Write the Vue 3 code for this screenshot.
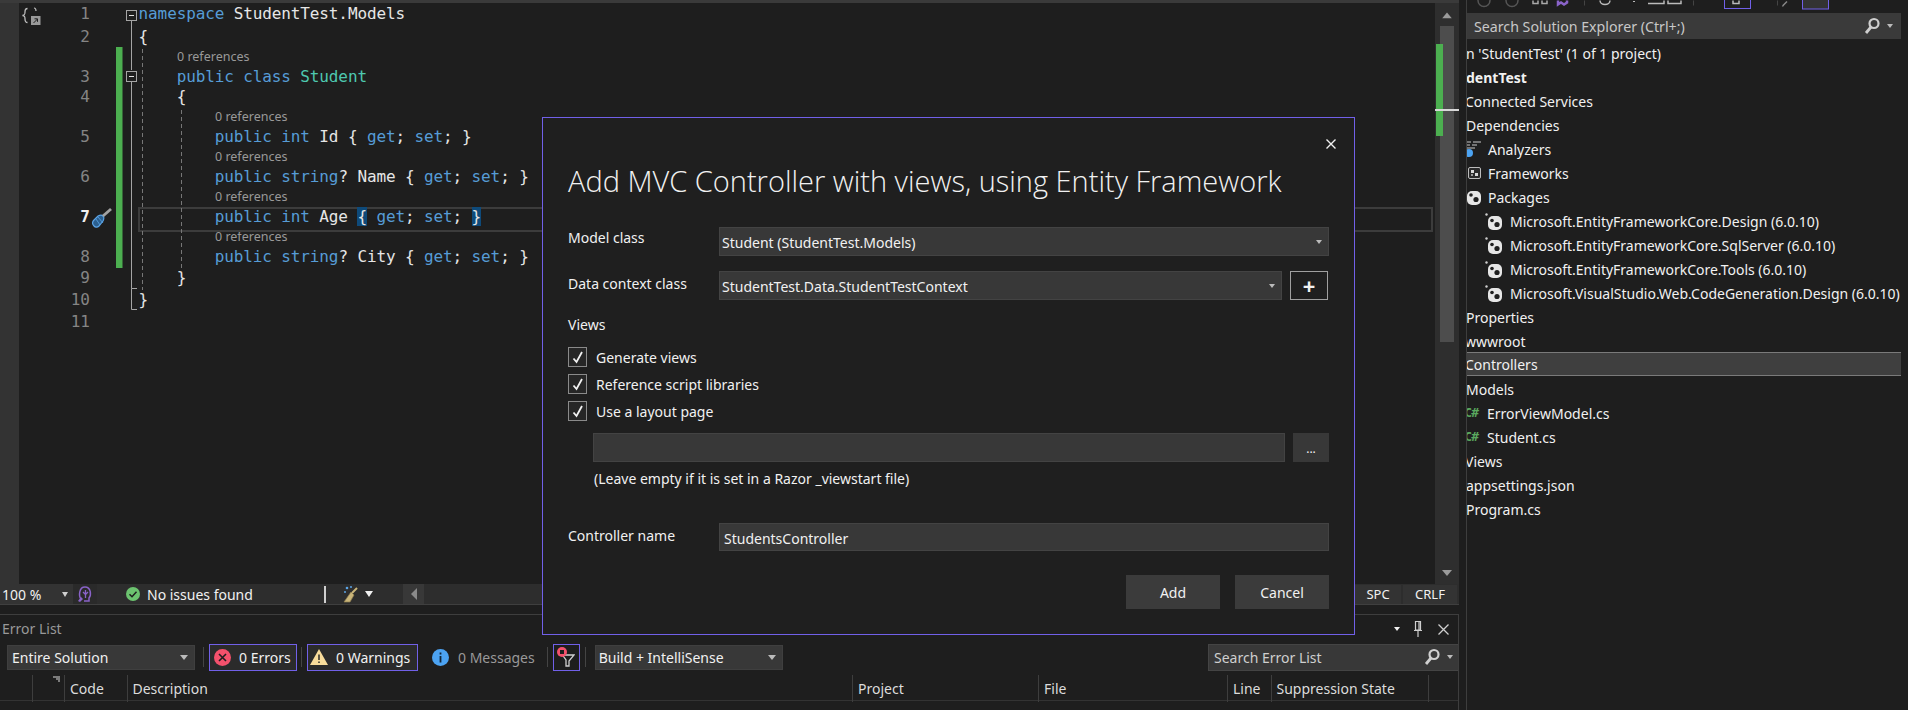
<script setup>
const k = (t) => ({ t, c: 'kw' })
const p = (t) => ({ t, c: 'pl' })
const y = (t) => ({ t, c: 'ty' })
const b = (t) => ({ t, c: 'br' })
const prop = (type, name) => [k('        public '), k(type), p(' ' + name + ' { '), k('get'), p('; '), k('set'), p('; }')]

const lines = [
  { n: 1, h: 22, toks: [k('namespace'), p(' StudentTest.Models')] },
  { n: 2, h: 22, low: true, toks: [p('{')] },
  { n: 3, h: 20, ref: 177, toks: [k('    public class '), y('Student')] },
  { n: 4, h: 20, toks: [p('    {')] },
  { n: 5, h: 20, ref: 215, toks: prop('int', 'Id') },
  { n: 6, h: 20, ref: 215, toks: [k('        public string'), p('? Name { '), k('get'), p('; '), k('set'), p('; }')] },
  { n: 7, h: 20, ref: 215, cur: true, toks: [k('        public int'), p(' Age '), b('{'), p(' '), k('get'), p('; '), k('set'), p('; '), b('}')] },
  { n: 8, h: 20, ref: 215, toks: [k('        public string'), p('? City { '), k('get'), p('; '), k('set'), p('; }')] },
  { n: 9, h: 22, toks: [p('    }')] },
  { n: 10, h: 21, toks: [p('}')] },
  { n: 11, h: 23, toks: [] }
]

const tree = [
  { t: "n 'StudentTest' (1 of 1 project)", cls: 'flush' },
  { t: 'dentTest', cls: 'flush bold' },
  { t: 'Connected Services', cls: 'clip' },
  { t: 'Dependencies', cls: 'flush' },
  { t: 'Analyzers', ic: 'an' },
  { t: 'Frameworks', ic: 'fw' },
  { t: 'Packages', ic: 'pk' },
  { t: 'Microsoft.EntityFrameworkCore.Design (6.0.10)', ic: 'sub' },
  { t: 'Microsoft.EntityFrameworkCore.SqlServer (6.0.10)', ic: 'sub' },
  { t: 'Microsoft.EntityFrameworkCore.Tools (6.0.10)', ic: 'sub' },
  { t: 'Microsoft.VisualStudio.Web.CodeGeneration.Design (6.0.10)', ic: 'sub' },
  { t: 'Properties', cls: 'flush' },
  { t: 'wwwroot', cls: 'clip' },
  { t: 'Controllers', cls: 'clip', sel: true },
  { t: 'Models', cls: 'flush' },
  { t: 'ErrorViewModel.cs', ic: 'cs' },
  { t: 'Student.cs', ic: 'cs' },
  { t: 'Views', cls: 'clip' },
  { t: 'appsettings.json', cls: 'flush' },
  { t: 'Program.cs', cls: 'flush' }
]

const cols = ['', '', 'Code', 'Description', 'Project', 'File', 'Line', 'Suppression State', '']
const checks = ['Generate views', 'Reference script libraries', 'Use a layout page']
</script>

<template>
  <div class="ide">
    <div class="left">
      <div class="topline"></div>
      <div class="editor">
        <div class="strip"></div>
        <div class="lines">
          <template v-for="l in lines" :key="l.n">
            <div v-if="l.ref" class="refline" :class="{ deep: l.ref > 200 }" :style="{ paddingLeft: l.ref - 19 + 'px' }">0 references</div>
            <div class="row" :class="{ low: l.low }" :style="{ height: l.h + 'px' }">
              <div class="num" :class="{ on: l.cur }">
                {{ l.n }}
                <svg v-if="l.cur" class="driver" width="22" height="22" viewBox="0 0 22 22">
                  <path d="M2 20c-2-2-2-4 0-6l4-4c2-1 4-1 5 0s1 3 0 5l-4 5c-2 2-4 1-5 0z" fill="#2b5f8f" stroke="#5ba4e6" stroke-width="1.2" />
                  <path d="M4 13l4 6M6 11l5 6" stroke="#5ba4e6" stroke-width=".8" />
                  <path d="M11 10l8-7" stroke="#a2a2a2" stroke-width="2.800" />
                </svg>
              </div>
              <div class="code" :class="{ cur: l.cur }">
                <span v-for="(s, i) in l.toks" :key="i" :class="s.c">{{ s.t }}</span>
              </div>
            </div>
          </template>
        </div>
        <div class="vscroll">
          <svg width="24" height="24" class="arrow-up" viewBox="0 0 24 24"><path d="M7 16l5-6 5 6z" fill="#9a9a9a" /></svg>
          <div class="thumb">
            <div class="thumb-green"></div>
            <div class="thumb-caret"></div>
          </div>
          <svg width="24" height="16" class="arrow-down" viewBox="0 0 24 16"><path d="M7 5l5 6 5-6z" fill="#9a9a9a" /></svg>
        </div>
      </div>

      <svg class="marks" width="200" height="340" viewBox="0 0 200 340">
        <rect x="116" y="47" width="6.5" height="221" fill="#4caf50" />
        <path d="M131.5 21V70M131.5 82V288.5H137M131.5 288.5V309.5H137" stroke="#a5a5a5" fill="none" />
        <rect x="126.5" y="10.5" width="10" height="10" fill="#1e1e1e" stroke="#a5a5a5" />
        <path d="M129 15.5h5" stroke="#e0e0e0" />
        <rect x="126.5" y="71.5" width="10" height="10" fill="#1e1e1e" stroke="#a5a5a5" />
        <path d="M129 76.5h5" stroke="#e0e0e0" />
        <path d="M142.5 49V290" stroke="#777" stroke-dasharray="4 3" />
        <path d="M181.5 110V268" stroke="#777" stroke-dasharray="4 3" />
        <path d="M27.500 8.500c-2.500 0-2.500 1.500-2.500 3.500s0 3-2.500 3.500c2.500.5 2.500 1.500 2.500 3.500s0 3.500 2.500 3.500" stroke="#bdbdbd" fill="none" stroke-width="1.300" />
        <path d="M34 8c1.500 0 2 1 2 3" stroke="#bdbdbd" fill="none" stroke-width="1.2" />
        <rect x="31" y="16" width="9.500" height="9" fill="#9a9a9a" />
        <path d="M33.500 23l4-4M34.500 18.800h3v3" stroke="#1e1e1e" fill="none" />
      </svg>

      <div class="status">
        <div class="zoomc"><span class="stext">100 %</span><i class="tri"></i></div>
        <div class="ai">
          <svg width="16" height="20" viewBox="0 0 16 20">
            <path d="M4 15C1.500 12 2 3 8 3s6.500 8 4 11v3H7" fill="none" stroke="#8a63c9" stroke-width="1.500" />
            <path d="M8.500 6v8M6 8l2.500 2.500L11 8" fill="none" stroke="#8a63c9" stroke-width="1.300" />
            <path d="M1 17l3-4 2 2-3 3z" fill="#8a63c9" />
          </svg>
        </div>
        <svg class="okic" width="14" height="14" viewBox="0 0 14 14">
          <circle cx="7" cy="7" r="7" fill="#6cc36f" />
          <path d="M3.500 7.200l2.500 2.500 4.500-5" fill="none" stroke="#1e1e1e" stroke-width="1.500" />
        </svg>
        <span class="okt stext">No issues found</span>
        <div class="vbar"></div>
        <svg class="broom" width="16" height="18" viewBox="0 0 16 18">
          <path d="M14 3l-6 6" stroke="#c9b57a" stroke-width="2" />
          <path d="M8 7l3 3-4 7H1z" fill="#c9b57a" stroke="#8e7d4d" stroke-width=".7" />
          <circle cx="4" cy="3" r="1.300" fill="#5ba4e6" />
          <circle cx="8" cy="2" r="1" fill="#5ba4e6" />
          <circle cx="2" cy="7" r="1" fill="#5ba4e6" />
        </svg>
        <i class="tri white"></i>
        <div class="hleft"><i class="tri-l"></i></div>
        <div class="fill"></div>
        <div class="cell spc">SPC</div>
        <div class="cell crlf">CRLF</div>
      </div>

      <div class="gap"></div>

      <div class="errors">
        <div class="etitle">
          <span class="etname">Error List</span>
          <div class="fill"></div>
          <i class="tri white small"></i>
          <svg class="pin" width="12" height="18" viewBox="0 0 12 18">
            <path d="M3.500 1.500h5v8.500h-5zM2 10.500h8M6 10.500V17M7 2v8" fill="none" stroke="#cfcfcf" stroke-width="1.200" />
          </svg>
          <svg class="xx" width="11" height="11" viewBox="0 0 11 11">
            <path d="M.5.500l10 10M10.500.500l-10 10" stroke="#cfcfcf" stroke-width="1.300" />
          </svg>
        </div>

        <div class="etools">
          <div class="combo c1"><span>Entire Solution</span><i class="tri dim"></i></div>
          <div class="tsep s1"></div>
          <div class="tbox b1">
            <svg width="17" height="17" viewBox="0 0 17 17">
              <circle cx="8.500" cy="8.500" r="8.500" fill="#f4516c" />
              <path d="M5 5l7 7M12 5l-7 7" stroke="#1e1e1e" stroke-width="1.600" />
            </svg>
            <span>0 Errors</span>
          </div>
          <div class="tsep s2"></div>
          <div class="tbox b2">
            <svg width="18" height="16" viewBox="0 0 18 16">
              <path d="M9 0l9 16H0z" fill="#f8dc9b" />
              <path d="M9 5.500v5.500M9 12.500v1.500" stroke="#1e1e1e" stroke-width="1.400" />
            </svg>
            <span>0 Warnings</span>
          </div>
          <div class="msg">
            <svg width="17" height="17" viewBox="0 0 17 17">
              <circle cx="8.500" cy="8.500" r="8.500" fill="#4ca3f2" />
              <path d="M8.500 3.500v2M8.500 7v6.500" stroke="#12263b" stroke-width="1.800" />
            </svg>
            <span>0 Messages</span>
          </div>
          <div class="tsep s3"></div>
          <div class="tbox b3">
            <svg width="19" height="22" viewBox="0 0 19 22">
              <path d="M6.500 9h11.500l-5 6v5h-3v-6z" fill="none" stroke="#cfcfcf" stroke-width="1.300" />
              <circle cx="6" cy="6" r="5" fill="#f4516c" />
              <rect x="4" y="4" width="4" height="4" fill="#1e1e1e" />
            </svg>
          </div>
          <div class="tsep s4"></div>
          <div class="combo c2"><span>Build + IntelliSense</span><i class="tri dim"></i></div>
          <div class="fill"></div>
          <div class="esearch">
            <span>Search Error List</span>
            <div class="fill"></div>
            <svg width="18" height="18" viewBox="0 0 18 18">
              <circle cx="11" cy="6.500" r="4.500" fill="none" stroke="#cfcfcf" stroke-width="2.200" />
              <path d="M8 10l-5 6" stroke="#cfcfcf" stroke-width="2.800" />
            </svg>
            <i class="tri dim small"></i>
          </div>
        </div>

        <div class="ehead">
          <div v-for="(c, i) in cols" :key="i" class="ecol">
            <svg v-if="i === 1" class="sorter" width="8" height="8" viewBox="0 0 8 8">
              <path d="M0 1h7M3 3h4M5 5h2" stroke="#9a9a9a" stroke-width="1.300" />
            </svg>
            {{ c }}
          </div>
        </div>
      </div>
    </div>

    <div class="midgap"></div>

    <div class="sol">
      <svg class="soltools" width="434" height="12" viewBox="0 0 434 12">
        <circle cx="17" cy="0" r="6" fill="none" stroke="#555" stroke-width="1.500" />
        <circle cx="45" cy="0" r="6" fill="none" stroke="#555" stroke-width="1.500" />
        <path d="M66 0v3h5V0M75 0v3h5V0" fill="none" stroke="#aaa" stroke-width="1.500" />
        <path d="M91 0v4l3-2 3 2 3-2v-2" fill="none" stroke="#8a63c9" stroke-width="2.500" />
        <path d="M117.500 0v5" stroke="#444" />
        <path d="M133 0a5 4 0 0 0 10 0" fill="none" stroke="#bbb" stroke-width="1.500" />
        <path d="M166 1h2" stroke="#bbb" />
        <path d="M181 3h16V0M201 0v3h13V0" fill="none" stroke="#bbb" stroke-width="1.500" />
        <path d="M226.500 0v5" stroke="#444" />
        <rect x="257.500" y="-3" width="26" height="11" fill="none" stroke="#7160e8" />
        <path d="M266 0v3h6V0" fill="none" stroke="#bbb" stroke-width="1.500" />
        <path d="M310.500 0v5" stroke="#444" />
        <path d="M316 5l4-4M316 5l-.5 1" stroke="#888" stroke-width="1.500" />
        <rect x="335.500" y="-3" width="26" height="11.500" fill="#333" stroke="#7160e8" />
      </svg>
      <div class="ssearch">
        <span>Search Solution Explorer (Ctrl+;)</span>
        <div class="fill"></div>
        <svg width="18" height="18" viewBox="0 0 18 18">
          <circle cx="11" cy="6.500" r="4.500" fill="none" stroke="#cfcfcf" stroke-width="2.200" />
          <path d="M8 10l-5 6" stroke="#cfcfcf" stroke-width="2.800" />
        </svg>
        <i class="tri dim small"></i>
      </div>
      <div class="tree">
        <div v-for="(n, i) in tree" :key="i" class="node" :class="[n.cls, n.ic, { sel: n.sel }]">
          <svg v-if="n.ic === 'an'" class="nic" width="14" height="18" viewBox="0 0 14 18">
            <path d="M0 2h4M6 2h8M0 5h3M5 5h5M0 8h8" stroke="#c8c8c8" stroke-width="1" />
            <circle cx="2" cy="13" r="4" fill="#4ca3f2" />
          </svg>
          <svg v-else-if="n.ic === 'fw'" class="nic" width="14" height="14" viewBox="0 0 14 14">
            <rect x="1.500" y="1.500" width="12" height="11" rx="1.500" fill="#2a2a2a" stroke="#bdbdbd" />
            <rect x="4" y="4" width="3" height="3" fill="#d8d8d8" />
            <rect x="8" y="7" width="3" height="3" fill="#d8d8d8" />
            <rect x="4" y="8" width="2" height="2" fill="#9a9a9a" />
          </svg>
          <svg v-else-if="n.ic === 'pk'" class="nic" width="14" height="15" viewBox="0 0 14 15">
            <rect x="0" y="1" width="14" height="14" rx="5" fill="#e6e6e6" />
            <circle cx="4" cy="5" r="1.800" fill="#1e1e1e" />
            <circle cx="9" cy="9.500" r="2.600" fill="#1e1e1e" />
          </svg>
          <svg v-else-if="n.ic === 'sub'" class="nicsub" width="18" height="18" viewBox="0 0 18 18">
            <circle cx="1.500" cy="1.500" r="1.200" fill="#cfcfcf" />
            <rect x="3" y="3" width="14" height="14" rx="5" fill="#e6e6e6" />
            <circle cx="7" cy="7.500" r="1.800" fill="#1e1e1e" />
            <circle cx="12" cy="11.500" r="2.600" fill="#1e1e1e" />
          </svg>
          <span v-else-if="n.ic === 'cs'" class="csic">C#</span>
          <span class="ntext">{{ n.t }}</span>
        </div>
      </div>
    </div>

    <div class="dialog">
      <svg class="close" width="10" height="10" viewBox="0 0 10 10">
        <path d="M.5.500l9 9M9.500.500l-9 9" stroke="#f1f1f1" stroke-width="1.400" />
      </svg>
      <h1 class="title">Add MVC Controller with views, using Entity Framework</h1>

      <div class="frow r-model">
        <label class="lab l1">Model class</label>
        <div class="inp grow"><span class="val">Student (StudentTest.Models)</span><i class="tri dim small"></i></div>
      </div>
      <div class="frow r-data">
        <label class="lab l2">Data context class</label>
        <div class="inp grow"><span class="val">StudentTest.Data.StudentTestContext</span><i class="tri dim small"></i></div>
        <div class="plus">+</div>
      </div>

      <div class="views">Views</div>
      <div v-for="(c, i) in checks" :key="c" class="chk" :class="'chk' + i">
        <span class="box">
          <svg width="12" height="13" viewBox="0 0 12 13"><path d="M1.500 7.500l3 3.500 5.500-10" fill="none" stroke="#f1f1f1" stroke-width="1.800" /></svg>
        </span>
        <span>{{ c }}</span>
      </div>

      <div class="layoutrow">
        <div class="inp grow"></div>
        <div class="dots">...</div>
      </div>
      <div class="note">(Leave empty if it is set in a Razor _viewstart file)</div>

      <div class="frow r-ctrl">
        <label class="lab l3">Controller name</label>
        <div class="inp grow"><span class="val v3">StudentsController</span></div>
      </div>

      <div class="actions">
        <button class="btn">Add</button>
        <button class="btn">Cancel</button>
      </div>
    </div>
  </div>
</template>

<style>
html, body { background: #1e1e1e; }
</style>

<style scoped>
* { box-sizing: border-box; }
.ide {
  width: 1908px; height: 710px; display: flex; position: relative; overflow: hidden;
  background: #1e1e1e; color: #f1f1f1;
  font-family: "Noto Sans", "Open Sans", sans-serif; font-size: 14px;
}
.fill { flex: 1; }
.left { width: 1459px; height: 710px; display: flex; flex-direction: column; position: relative; }
.topline { height: 3px; background: #3a3a3a; flex: none; }
.editor { height: 581px; flex: none; display: flex; }
.strip { width: 19px; background: #333; flex: none; }
.lines { flex: 1; min-width: 0; }
.refline { height: 20px; font-size: 12.500px; line-height: 19px; color: #999; }
.refline.deep { line-height: 20px; }
.row { display: flex; align-items: center; }
.row.low { padding-top: 2px; }
.num {
  width: 71px; flex: none; text-align: right; position: relative;
  font: 16px/20px "DejaVu Sans Mono", monospace; color: #858585;
}
.num.on { color: #f1f1f1; font-weight: 700; }
.driver { position: absolute; left: 73px; top: -1px; }
.code {
  flex: 1; margin-left: 48.6px; position: relative; white-space: pre;
  font: 16px/20px "DejaVu Sans Mono", monospace; letter-spacing: -.12px; height: 20px; color: #e6e6e6;
}
.code.cur::before {
  content: ""; position: absolute; left: -1px; right: 2px; top: 0; height: 21px;
  border: 2px solid #3c3c3c;
}
.code span { position: relative; }
.kw { color: #569cd6; }
.ty { color: #4ec9b0; }
.pl { color: #e6e6e6; }
.br { color: #e6e6e6; background: #0e4a7a; }
.vscroll {
  width: 24.5px; flex: none; background: #2e2e2e; display: flex; flex-direction: column; align-items: center;
}
.arrow-up { flex: none; margin-top: 0; height: 23px; }
.thumb { width: 14px; height: 316px; background: #4d4d4d; position: relative; flex: none; }
.thumb-green { position: absolute; left: -3.500px; top: 18px; width: 6.500px; height: 92px; background: #4caf50; }
.thumb-caret { position: absolute; left: -5px; width: 24px; top: 83px; height: 2px; background: #d8d8d8; }
.arrow-down { flex: none; margin-top: auto; margin-bottom: 3px; }
.marks { position: absolute; left: 0; top: 0; pointer-events: none; }
.tri { display: inline-block; width: 0; height: 0; border-left: 4px solid transparent; border-right: 4px solid transparent; border-top: 5px solid #d0d0d0; flex: none; }
.tri.white { border-top-color: #f1f1f1; border-left-width: 4.500px; border-right-width: 4.500px; border-top-width: 6px; }
.tri.dim { border-top-color: #bbb; }
.tri.small { border-left-width: 3.500px; border-right-width: 3.500px; border-top-width: 4px; }
.status {
  height: 21px; flex: none; background: #2d2d2d; display: flex; align-items: center;
  border-bottom: 1px solid #3f3f3f; font-size: 14px; line-height: 20px;
}
.stext { padding-top: 1px; }
.zoomc { width: 73px; height: 20px; background: #333; display: flex; align-items: center; padding-left: 2px; flex: none; }
.zoomc .tri { margin-left: 21px; border-left-width: 3.500px; border-right-width: 3.500px; border-top-width: 5px; }
.ai { width: 24px; height: 20px; display: flex; align-items: center; justify-content: center; flex: none; background: #2a2a2a; }
.okic { margin-left: 29px; flex: none; }
.okt { margin-left: 7px; width: 177px; flex: none; white-space: nowrap; }
.vbar { width: 2px; height: 17px; background: #cfcfcf; flex: none; }
.broom { margin-left: 17px; flex: none; }
.status .tri.white { margin-left: 6px; }
.hleft { margin-left: 30px; width: 21px; height: 20px; background: #383838; display: flex; align-items: center; justify-content: center; flex: none; }
.tri-l { width: 0; height: 0; border-top: 6px solid transparent; border-bottom: 6px solid transparent; border-right: 6px solid #8a8a8a; }
.cell { height: 19px; background: #333; display: flex; align-items: center; justify-content: center; flex: none; font-size: 13px; }
.spc { width: 46px; }
.crlf { width: 54px; margin-left: 2px; margin-right: 2px; }
.gap { height: 9px; flex: none; }
.errors { flex: 1; border-top: 1px solid #3e3e3e; border-right: 1px solid #3e3e3e; display: flex; flex-direction: column; }
.etitle { height: 28px; flex: none; display: flex; align-items: center; padding-left: 2px; color: #999; font-size: 14px; }
.etname { padding-bottom: 2px; }
.etitle .tri { margin-right: 12px; }
.pin { margin-right: 14px; flex: none; }
.xx { margin-right: 9px; flex: none; }
.etools { height: 28px; flex: none; display: flex; align-items: center; font-size: 14px; }
.combo { height: 25px; background: #383838; border: 1px solid #3f3f3f; display: flex; align-items: center; justify-content: space-between; padding: 0 6px 0 4px; flex: none; }
.c1 { width: 188px; margin-left: 7px; }
.c2 { width: 188px; margin-left: 9px; padding-left: 3px; }
.tsep { width: 1px; height: 20px; background: #444; flex: none; }
.s1 { margin-left: 8px; }
.s2 { margin-left: 4px; }
.s3 { margin-left: 12px; }
.s4 { margin-left: 5px; }
.tbox { height: 27px; border: 1px solid #7160e8; display: flex; align-items: center; flex: none; background: #2b2b2b; }
.b1 { width: 88px; margin-left: 5px; padding-left: 4px; gap: 8px; }
.b2 { width: 111px; margin-left: 5px; padding-left: 2px; gap: 8px; }
.b3 { width: 27px; margin-left: 5px; padding-left: 2px; background: #1e1e1e; }
.msg { display: flex; align-items: center; margin-left: 14px; gap: 9px; color: #999; flex: none; }
.esearch { width: 250px; height: 27px; background: #383838; border: 1px solid #444; border-right: 0; display: flex; align-items: center; padding: 0 5px 0 5px; flex: none; color: #cfcfcf; }
.esearch svg { margin-right: 6px; }
.ehead {
  margin-top: 4px; height: 26px; flex: none; display: grid; font-size: 14px; color: #dcdcdc;
  grid-template-columns: 32px 32px 62.500px 725.500px 186px 189px 43.500px 157px 28px;
  border-bottom: 1px solid #333;
}
.ecol { border-left: 1px solid #3e3e3e; padding-left: 5px; line-height: 27px; position: relative; white-space: nowrap; }
.ecol:first-child { border-left: 0; }
.sorter { position: absolute; left: 20px; top: 1px; }
.midgap { width: 8px; flex: none; border-right: 1px solid #3e3e3e; }
.sol { flex: 1; min-width: 0; padding-right: 7px; display: flex; flex-direction: column; }
.soltools { display: block; flex: none; height: 13px; }
.ssearch {
  height: 26px; flex: none; background: #3a3a3a; display: flex; align-items: center; padding: 0 8px 0 7px;
  color: #c8c8c8; font-size: 14.200px;
}
.ssearch svg { margin-right: 6px; }
.tree { margin-top: 2px; overflow: hidden; font-size: 14px; }
.node { height: 24px; display: flex; align-items: center; white-space: nowrap; position: relative; }
.node.flush .ntext { margin-left: -1px; }
.node.clip .ntext { margin-left: -2px; }
.node.bold { font-weight: 700; }
.node.sel { height: 24px; margin-top: -1px; margin-bottom: 1px; background: #3f3f3f; border-top: 1px solid #7a7a7a; border-bottom: 1px solid #7a7a7a; }
.nic { margin-right: 7px; flex: none; width: 14px; }
.nicsub { margin-left: 18px; margin-right: 7px; flex: none; margin-top: 2px; }
.csic { width: 20px; margin-left: -9px; flex: none; font: 700 13px/24px "DejaVu Sans Mono", monospace; color: #5aa85e; letter-spacing: -1px; text-align: right; margin-right: 9px; }
.dialog {
  position: absolute; left: 542px; top: 117px; width: 813px; height: 518px; background: #1f1f1f;
  border: 1px solid #7160e8; padding: 43px 25px 0 25px; display: flex; flex-direction: column;
}
.close { position: absolute; right: 18px; top: 21px; }
.title { margin: 0; height: 40px; font-size: 29px; line-height: 40px; font-weight: 300; font-family: "Open Sans", sans-serif; color: #f1f1f1; white-space: nowrap; }
.frow { display: flex; align-items: center; flex: none; }
.lab { width: 151px; flex: none; font-size: 14px; }
.l1 { margin-bottom: 8px; }
.l2 { margin-bottom: 4px; }
.l3 { margin-bottom: 3px; }
.r-model { margin-top: 26px; height: 29px; }
.r-data { margin-top: 15px; height: 29px; }
.r-ctrl { margin-top: 35px; height: 28px; }
.inp { background: #383838; border: 1px solid #434343; height: 100%; display: flex; align-items: center; justify-content: space-between; padding: 0 6px 0 2px; }
.grow { flex: 1; min-width: 0; }
.val { font-size: 14px; padding-top: 2px; }
.v3 { padding-left: 2px; padding-top: 3px; }
.plus { width: 38px; height: 29px; margin-left: 8px; margin-right: 1px; margin-top: -1px; border: 1px solid #a0a0a0; display: flex; align-items: center; justify-content: center; font-size: 22px; font-weight: 700; line-height: 1; flex: none; }
.views { margin-top: 16px; height: 18px; line-height: 18px; font-size: 14px; }
.chk { display: flex; align-items: center; height: 20px; gap: 9px; font-size: 14px; flex: none; margin-top: 7px; }
.chk0 { margin-top: 13px; }
.box { width: 19px; height: 20px; border: 1px solid #8a8a8a; display: flex; align-items: center; justify-content: center; flex: none; background: #262626; }
.layoutrow { margin-top: 12px; margin-left: 25px; height: 29px; display: flex; gap: 8px; flex: none; }
.dots { width: 36px; background: #383838; display: flex; align-items: flex-end; justify-content: center; font-size: 12px; line-height: 20px; padding-bottom: 3px; }
.note { margin-top: 8px; margin-left: 26px; height: 18px; line-height: 18px; font-size: 14px; }
.actions { margin-top: 24px; display: flex; justify-content: flex-end; gap: 15px; flex: none; }
.btn { width: 94px; height: 34px; border: 0; background: #3b3b3b; color: #f1f1f1; font: 14px "Noto Sans", sans-serif; padding: 0; }
</style>
